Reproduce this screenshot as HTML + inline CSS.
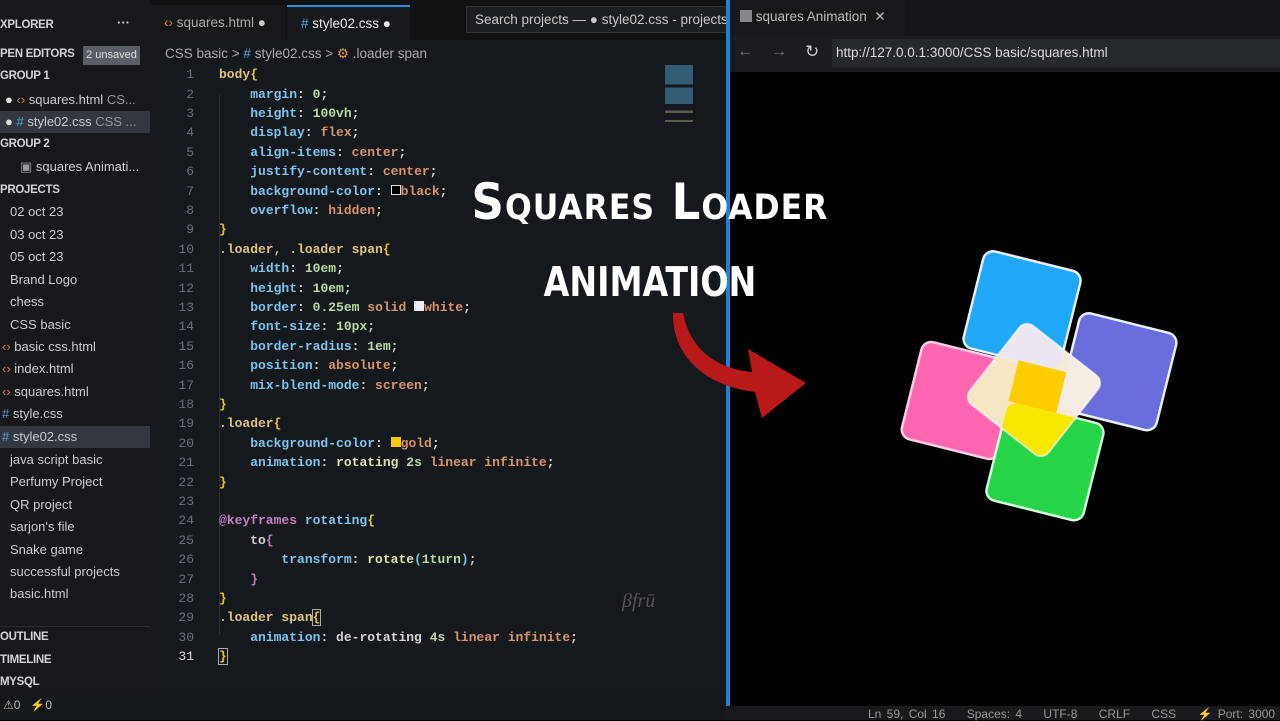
<!DOCTYPE html>
<html><head><meta charset="utf-8"><style>
*{margin:0;padding:0;box-sizing:border-box}
body{width:1280px;height:720px;overflow:hidden;background:#000;position:relative;font-family:"Liberation Sans",sans-serif}
.abs{position:absolute}
#side{left:0;top:0;width:150px;height:694px;background:#16181b;color:#c9ccd1;font-size:13px}
#side div.i{position:absolute;left:0;white-space:nowrap;height:22px;line-height:22px;width:150px}
.h{font-weight:bold;font-size:11.5px;letter-spacing:-0.3px;color:#d0d3d8}
.sel{background:#33373f}
#tabs{left:150px;top:0;width:576px;height:40px;background:#0f1113}
#editor{left:150px;top:40px;width:576px;height:654px;background:#15181c}
.ln{position:absolute;left:150px;width:44px;text-align:right;color:#6b7078;font-family:"Liberation Mono",monospace;font-size:13px}
.cl{position:absolute;left:219px;font-family:"Liberation Mono",monospace;font-size:13px;white-space:pre;color:#d4d4d4;font-weight:bold}
.p{color:#7cc3ea}.v{color:#d69468}.n{color:#b8d8a4}.s{color:#dcc47a}.b{color:#e8c02e}.k{color:#c57bc0}.f{color:#dfe0a8}.w{color:#d4d4d4}
#status{left:0;top:694px;width:726px;height:26px;background:#15181b;color:#bbb;font-size:12px}
#status2{left:726px;top:706px;width:554px;height:14px;background:#17191c}
.t{position:absolute;left:400px;width:500px;text-align:center;color:#fff;font-family:'DejaVu Sans Condensed',sans-serif;font-weight:bold;font-variant:small-caps;white-space:nowrap;line-height:60px}
</style></head><body>
<div id="side" class="abs">
<div class="i h" style="top:14px;left:0">XPLORER</div><div class="i" style="top:12px;left:117px;width:20px;font-weight:bold">···</div>
<div class="i h" style="top:43px">PEN EDITORS</div>
<div class="abs" style="left:83px;top:46px;width:57px;height:19px;background:#5a5e66;color:#ddd;font-size:11px;line-height:19px;text-align:center">2 unsaved</div>
<div class="i h" style="top:65px">GROUP 1</div>
<div class="i" style="top:89px;padding-left:5px"><span style="color:#ddd">●</span> <span style="color:#e07a3a">‹›</span> squares.html <span style="color:#999">CS...</span></div>
<div class="i sel" style="top:111px;padding-left:5px"><span style="color:#ddd">●</span> <span style="color:#4aa8e0">#</span> style02.css <span style="color:#999">CSS ...</span></div>
<div class="i h" style="top:133px">GROUP 2</div>
<div class="i" style="top:156px;padding-left:20px"><span style="color:#999">▣</span> squares Animati...</div>
<div class="i h" style="top:179px">PROJECTS</div>
<div class="i" style="top:201px;padding-left:10px">02 oct 23</div>
<div class="i" style="top:224px;padding-left:10px">03 oct 23</div>
<div class="i" style="top:246px;padding-left:10px">05 oct 23</div>
<div class="i" style="top:269px;padding-left:10px">Brand Logo</div>
<div class="i" style="top:291px;padding-left:10px">chess</div>
<div class="i" style="top:314px;padding-left:10px">CSS basic</div>
<div class="i" style="top:336px;padding-left:2px"><span style="color:#e07a3a">‹›</span> basic css.html</div>
<div class="i" style="top:358px;padding-left:2px"><span style="color:#e07a3a">‹›</span> index.html</div>
<div class="i" style="top:381px;padding-left:2px"><span style="color:#e07a3a">‹›</span> squares.html</div>
<div class="i" style="top:403px;padding-left:2px"><span style="color:#4aa8e0">#</span> style.css</div>
<div class="i sel" style="top:426px;padding-left:2px"><span style="color:#4aa8e0">#</span> style02.css</div>
<div class="i" style="top:449px;padding-left:10px">java script basic</div>
<div class="i" style="top:471px;padding-left:10px">Perfumy Project</div>
<div class="i" style="top:494px;padding-left:10px">QR project</div>
<div class="i" style="top:516px;padding-left:10px">sarjon's file</div>
<div class="i" style="top:539px;padding-left:10px">Snake game</div>
<div class="i" style="top:561px;padding-left:10px">successful projects</div>
<div class="i" style="top:583px;padding-left:10px">basic.html</div>
<div class="abs" style="left:0;top:626px;width:150px;height:1px;background:#2a2d32"></div>
<div class="i h" style="top:626px">OUTLINE</div>
<div class="i h" style="top:649px">TIMELINE</div>
<div class="i h" style="top:671px">MYSQL</div>
</div>
<div id="tabs" class="abs">
<div class="abs" style="left:0;top:5px;width:135px;height:35px;background:#16181b;color:#aaa;font-size:13.5px;line-height:35px;padding-left:14px"><span style="color:#e07a3a">‹›</span> squares.html <span style="color:#ccc">●</span></div>
<div class="abs" style="left:137px;top:5px;width:123px;height:35px;background:#15181c;border-top:2px solid #2a8ad6;color:#e8e8e8;font-size:13.5px;line-height:33px;padding-left:14px"><span style="color:#4aa8e0">#</span> style02.css <span style="color:#eee">●</span></div>
<div class="abs" style="left:316px;top:6px;width:265px;height:27px;background:#1b1e22;border:1px solid #333;color:#c8c8c8;font-size:13.5px;line-height:25px;padding-left:8px;white-space:nowrap;overflow:hidden">Search projects — ● style02.css - projects -</div>
</div>
<div id="editor" class="abs">
<div class="abs" style="left:15px;top:6px;color:#aaa;font-size:13.5px;white-space:nowrap">CSS basic &gt; <span style="color:#4aa8e0">#</span> style02.css &gt; <span style="color:#e0a030">⚙</span> .loader span</div>
<div class="abs" style="left:515px;top:25px;width:28px;height:65px;opacity:.6;background:linear-gradient(#4a8ab0 0 30%,transparent 30% 35%,#4a8ab0 35% 60%,transparent 60% 70%,#8a8a6a 70% 74%,transparent 74% 85%,#8a8a6a 85% 88%,transparent 88%)"></div>
<div class="abs" style="left:69px;top:55px;width:1px;height:540px;background:#2c2f34"></div>
</div>
<div class="ln" style="top:67px">1</div><div class="ln" style="top:87px">2</div><div class="ln" style="top:106px">3</div><div class="ln" style="top:125px">4</div><div class="ln" style="top:145px">5</div><div class="ln" style="top:164px">6</div><div class="ln" style="top:184px">7</div><div class="ln" style="top:203px">8</div><div class="ln" style="top:222px">9</div><div class="ln" style="top:242px">10</div><div class="ln" style="top:261px">11</div><div class="ln" style="top:281px">12</div><div class="ln" style="top:300px">13</div><div class="ln" style="top:319px">14</div><div class="ln" style="top:339px">15</div><div class="ln" style="top:358px">16</div><div class="ln" style="top:378px">17</div><div class="ln" style="top:397px">18</div><div class="ln" style="top:416px">19</div><div class="ln" style="top:436px">20</div><div class="ln" style="top:455px">21</div><div class="ln" style="top:475px">22</div><div class="ln" style="top:494px">23</div><div class="ln" style="top:513px">24</div><div class="ln" style="top:533px">25</div><div class="ln" style="top:552px">26</div><div class="ln" style="top:572px">27</div><div class="ln" style="top:591px">28</div><div class="ln" style="top:610px">29</div><div class="ln" style="top:630px">30</div><div class="ln" style="top:649px;color:#ddd">31</div>
<div class="cl" style="top:67px"><span class="s">body</span><span class="b">{</span></div>
<div class="cl" style="top:87px">    <span class="p">margin</span>: <span class="n">0</span>;</div>
<div class="cl" style="top:106px">    <span class="p">height</span>: <span class="n">100vh</span>;</div>
<div class="cl" style="top:125px">    <span class="p">display</span>: <span class="v">flex</span>;</div>
<div class="cl" style="top:145px">    <span class="p">align-items</span>: <span class="v">center</span>;</div>
<div class="cl" style="top:164px">    <span class="p">justify-content</span>: <span class="v">center</span>;</div>
<div class="cl" style="top:184px">    <span class="p">background-color</span>: <span style="display:inline-block;width:10px;height:10px;border:1px solid #ddd;background:#000"></span><span class="v">black</span>;</div>
<div class="cl" style="top:203px">    <span class="p">overflow</span>: <span class="v">hidden</span>;</div>
<div class="cl" style="top:222px"><span class="b">}</span></div>
<div class="cl" style="top:242px"><span class="s">.loader, .loader span</span><span class="b">{</span></div>
<div class="cl" style="top:261px">    <span class="p">width</span>: <span class="n">10em</span>;</div>
<div class="cl" style="top:281px">    <span class="p">height</span>: <span class="n">10em</span>;</div>
<div class="cl" style="top:300px">    <span class="p">border</span>: <span class="n">0.25em</span> <span class="v">solid</span> <span style="display:inline-block;width:10px;height:10px;background:#eee"></span><span class="v">white</span>;</div>
<div class="cl" style="top:319px">    <span class="p">font-size</span>: <span class="n">10px</span>;</div>
<div class="cl" style="top:339px">    <span class="p">border-radius</span>: <span class="n">1em</span>;</div>
<div class="cl" style="top:358px">    <span class="p">position</span>: <span class="v">absolute</span>;</div>
<div class="cl" style="top:378px">    <span class="p">mix-blend-mode</span>: <span class="v">screen</span>;</div>
<div class="cl" style="top:397px"><span class="b">}</span></div>
<div class="cl" style="top:416px"><span class="s">.loader</span><span class="b">{</span></div>
<div class="cl" style="top:436px">    <span class="p">background-color</span>: <span style="display:inline-block;width:10px;height:10px;background:#f5c800"></span><span class="v">gold</span>;</div>
<div class="cl" style="top:455px">    <span class="p">animation</span>: <span class="f">rotating</span> <span class="n">2s</span> <span class="v">linear infinite</span>;</div>
<div class="cl" style="top:475px"><span class="b">}</span></div>
<div class="cl" style="top:513px"><span class="k">@keyframes</span> <span class="p">rotating</span><span class="b">{</span></div>
<div class="cl" style="top:533px">    <span class="w">to</span><span class="k">{</span></div>
<div class="cl" style="top:552px">        <span class="p">transform</span>: <span class="f">rotate</span><span class="p">(</span><span class="n">1turn</span><span class="p">)</span>;</div>
<div class="cl" style="top:572px">    <span class="k">}</span></div>
<div class="cl" style="top:591px"><span class="b">}</span></div>
<div class="cl" style="top:610px"><span class="s">.loader span</span><span class="b" style="outline:1px solid #aaa">{</span></div>
<div class="cl" style="top:630px">    <span class="p">animation</span>: <span class="w">de-rotating</span> <span class="n">4s</span> <span class="v">linear infinite</span>;</div>
<div class="cl" style="top:649px"><span class="b" style="outline:1px solid #aaa">}</span></div>
<div class="abs" style="left:622px;top:590px;color:#555;font-family:'Liberation Serif',serif;font-style:italic;font-size:20px">βfrū</div>
<div id="status" class="abs"><span style="position:absolute;left:3px;top:4px">⚠0 &nbsp; ⚡0</span></div>
<div id="status2" class="abs"><div style="position:absolute;left:142px;top:1px;color:#999;font-size:12px;white-space:nowrap;word-spacing:2px">Ln 59, Col 16 &nbsp;&nbsp; Spaces: 4 &nbsp;&nbsp; UTF-8 &nbsp;&nbsp; CRLF &nbsp;&nbsp; CSS &nbsp;&nbsp; ⚡ Port: 3000 &nbsp;&nbsp; ✓ S</div></div>
<div class="abs" style="left:726px;top:0;width:4px;height:706px;background:#1f82d0"></div>
<div class="abs" style="left:730px;top:0;width:550px;height:36px;background:#131518"></div>
<div class="abs" style="left:730px;top:0;width:175px;height:36px;background:#16181b;color:#bbb;font-size:13.5px;line-height:34px;padding-left:10px;white-space:nowrap"><span style="display:inline-block;width:12px;height:12px;background:#888;vertical-align:-1px"></span> squares Animation &nbsp;✕</div>
<div class="abs" style="left:730px;top:36px;width:550px;height:36px;background:#1a1c20"></div>
<div class="abs" style="left:737px;top:43px;color:#777;font-size:16px">←</div>
<div class="abs" style="left:771px;top:43px;color:#777;font-size:16px">→</div>
<div class="abs" style="left:805px;top:42px;color:#ccc;font-size:17px">↻</div>
<div class="abs" style="left:832px;top:39px;width:448px;height:28px;background:#25282d;color:#ddd;font-size:13.5px;line-height:28px;padding-left:4px">http://127.0.0.1:3000/CSS basic/squares.html</div>
<div class="t" style="top:172px;font-size:50px;letter-spacing:1px">Squares Loader</div>
<div class="t" style="top:246px;font-size:58px;transform:scaleX(0.9)">animation</div>
<svg class="abs" style="left:0;top:0" width="1280" height="720">
<path d="M673,313 C672,352 700,385 755,392 L762,418 L806,383 L748,349 L752,372 C714,368 690,348 683,313 Z" fill="#b8191b"/>
<defs>
<clipPath id="cc"><rect x="-50" y="-50" width="100" height="100" rx="10" transform="rotate(24)"/></clipPath>
</defs>
<g transform="translate(1034,390) rotate(14)">
<g stroke="#e8f0ff" stroke-width="2.5">
<rect x="-81" y="-125" width="100" height="100" rx="10" fill="#1ea8f6"/>
<rect x="27" y="-88" width="100" height="100" rx="10" fill="#6a6ddc"/>
<rect x="-119" y="-22" width="100" height="100" rx="10" fill="#ff66b2" stroke="#ffd0e8"/>
<rect x="-22" y="17" width="100" height="100" rx="10" fill="#26d448" stroke="#d0ffd8"/>
</g>
<g clip-path="url(#cc)">
<rect x="-60" y="-60" width="120" height="120" fill="#f3ead8"/>
<rect x="-81" y="-125" width="100" height="100" rx="10" fill="#ece6f2"/>
<rect x="27" y="-88" width="100" height="100" rx="10" fill="#f5ece4"/>
<rect x="-119" y="-22" width="100" height="100" rx="10" fill="#f6e6c4"/>
<rect x="-22" y="17" width="100" height="100" rx="10" fill="#f8e800"/>
<rect x="-22" y="-25" width="49" height="42" fill="#ffcc00"/>
</g>
<rect x="-50" y="-50" width="100" height="100" rx="10" transform="rotate(24)" fill="none" stroke="#fff" stroke-opacity=".6" stroke-width="2"/>
</g>
</svg>
</body></html>
